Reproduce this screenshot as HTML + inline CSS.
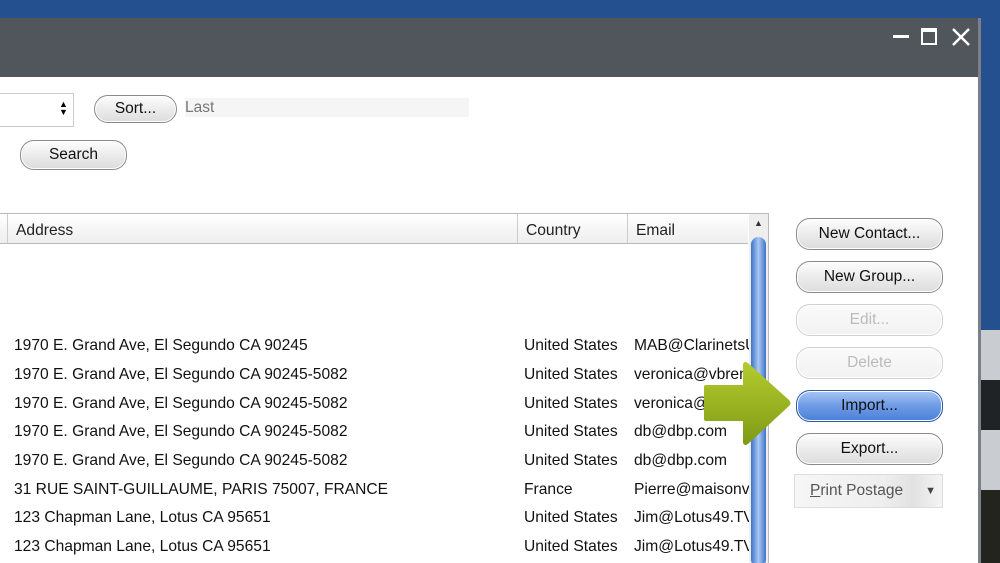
<!DOCTYPE html>
<html style="margin:0;height:563px;overflow:hidden"><head><style>
body{margin:0;width:1000px;height:563px;overflow:hidden;background:#24508f;font-family:"Liberation Sans",sans-serif;position:relative}
.abs{position:absolute}
.win{left:0;top:18px;width:978px;height:560px;background:#fff;border-right:3px solid #7b8088}
.title{left:0;top:18px;width:978px;height:59px;background:#50565c}
.btn{position:absolute;border:1px solid #8a8a8a;border-radius:14px;background:linear-gradient(#fdfdfd,#ececec 50%,#dcdcdc);text-align:center;font-size:15.5px;color:#111;box-shadow:inset 0 0 0 1px #fff}
.side{left:796px;width:145px;height:30px;line-height:30px}
.dis{color:#bbb;border-color:#d0d0d0;background:linear-gradient(#fafafa,#f2f2f2)}
.row{position:absolute;font-size:15.6px;color:#111;white-space:nowrap}
</style></head><body>
<div class="abs win"></div>
<div class="abs title"></div>
<div class="abs" style="left:893px;top:35px;width:16px;height:3px;background:#fff"></div>
<div class="abs" style="left:921px;top:28px;width:12px;height:11px;border:2px solid #fff;border-top-width:4px"></div>
<svg class="abs" style="left:951px;top:27px" width="20" height="20"><path d="M2 2L18 18M18 2L2 18" stroke="#fff" stroke-width="2.5"/></svg>
<div class="abs" style="left:981px;top:330px;width:19px;height:233px;background:#c9ccd0"></div>
<div class="abs" style="left:981px;top:380px;width:19px;height:50px;background:#1f2326"></div>
<div class="abs" style="left:981px;top:490px;width:19px;height:73px;background:#24241e"></div>
<div class="abs" style="left:-2px;top:93px;width:74px;height:32px;border:1px solid #ccc;background:#fff"></div>
<div class="abs" style="left:59px;top:100px;font-size:9px;line-height:8px">▲<br>▼</div>
<div class="btn" style="left:94px;top:95px;width:81px;height:26px;line-height:26px">Sort...</div>
<div class="abs" style="left:185px;top:98px;width:284px;height:19px;background:#f5f5f5;color:#777;font-size:15.5px;line-height:20px">Last</div>
<div class="btn" style="left:20px;top:140px;width:105px;height:28px;line-height:28px">Search</div>
<div class="abs" style="left:0;top:213px;width:768px;height:360px;border:1px solid #bbb;border-left:none;background:#fff"></div>
<div class="abs" style="left:0;top:214px;width:748px;height:29px;background:linear-gradient(#fff,#eee);border-bottom:1px solid #bbb"></div>
<div class="abs" style="left:7px;top:214px;width:1px;height:29px;background:#ccc"></div>
<div class="abs" style="left:517px;top:214px;width:1px;height:29px;background:#ccc"></div>
<div class="abs" style="left:627px;top:214px;width:1px;height:29px;background:#ccc"></div>
<div class="row" style="left:16px;top:222px;color:#222">Address</div>
<div class="row" style="left:526px;top:222px;color:#222">Country</div>
<div class="row" style="left:636px;top:222px;color:#222">Email</div>
<div class="abs" style="left:749px;top:214px;width:19px;height:349px;background:#eee"></div>
<div class="abs" style="left:754px;top:218px;font-size:9px;color:#333">▲</div>
<div class="abs" style="left:751px;top:237px;width:15px;height:330px;border-radius:8px;background:linear-gradient(90deg,#3f73c9,#a9c8f2 50%,#3f73c9)"></div>
<div style="position:absolute;left:0;top:0;width:749px;height:563px;overflow:hidden">
<div class="row" style="left:14px;top:337px">1970 E. Grand Ave, El Segundo CA 90245</div>
<div class="row" style="left:14px;top:366px">1970 E. Grand Ave, El Segundo CA 90245-5082</div>
<div class="row" style="left:14px;top:395px">1970 E. Grand Ave, El Segundo CA 90245-5082</div>
<div class="row" style="left:14px;top:423px">1970 E. Grand Ave, El Segundo CA 90245-5082</div>
<div class="row" style="left:14px;top:452px">1970 E. Grand Ave, El Segundo CA 90245-5082</div>
<div class="row" style="left:14px;top:481px">31 RUE SAINT-GUILLAUME, PARIS 75007, FRANCE</div>
<div class="row" style="left:14px;top:509px">123 Chapman Lane, Lotus CA 95651</div>
<div class="row" style="left:14px;top:538px">123 Chapman Lane, Lotus CA 95651</div>
<div class="row" style="left:524px;top:337px">United States</div>
<div class="row" style="left:524px;top:366px">United States</div>
<div class="row" style="left:524px;top:395px">United States</div>
<div class="row" style="left:524px;top:423px">United States</div>
<div class="row" style="left:524px;top:452px">United States</div>
<div class="row" style="left:524px;top:481px">France</div>
<div class="row" style="left:524px;top:509px">United States</div>
<div class="row" style="left:524px;top:538px">United States</div>
<div class="row" style="left:634px;top:337px">MAB@ClarinetsUSA</div>
<div class="row" style="left:634px;top:366px">veronica@vbrenterprises</div>
<div class="row" style="left:634px;top:395px">veronica@vbr</div>
<div class="row" style="left:634px;top:423px">db@dbp.com</div>
<div class="row" style="left:634px;top:452px">db@dbp.com</div>
<div class="row" style="left:634px;top:481px">Pierre@maisonvin</div>
<div class="row" style="left:634px;top:509px">Jim@Lotus49.TV</div>
<div class="row" style="left:634px;top:538px">Jim@Lotus49.TV</div>
</div>
<svg class="abs" style="left:703px;top:360px" width="90" height="88"><defs><linearGradient id="g" x1="0" y1="0" x2="0" y2="1"><stop offset="0" stop-color="#b5cc2e"/><stop offset="1" stop-color="#7e9a16"/></linearGradient></defs><path d="M3 25H40V4Q42 0 46 4L86 40Q89 43 86 46L46 83Q42 87 40 83V61H3Q1 61 1 59V27Q1 25 3 25Z" fill="url(#g)"/></svg>
<div class="btn side" style="top:218px">New Contact...</div>
<div class="btn side" style="top:261px">New Group...</div>
<div class="btn side dis" style="top:304px">Edit...</div>
<div class="btn side dis" style="top:347px">Delete</div>
<div class="btn side" style="top:390px;background:linear-gradient(#a9c6f3,#6d9be6 50%,#4b7fd6);border-color:#2d58a6">Import...</div>
<div class="btn side" style="top:433px">Export...</div>
<div class="abs" style="left:794px;top:474px;width:147px;height:32px;border:1px solid #ddd;background:linear-gradient(90deg,#f6f6f6,#eee 60%,#e2e2e2 80%,#f4f4f4);font-size:15.5px;color:#555;line-height:32px"><span style="margin-left:15px"><u>P</u>rint Postage</span><span style="position:absolute;right:6px;font-size:11px;color:#444">▼</span></div>
</body></html>
